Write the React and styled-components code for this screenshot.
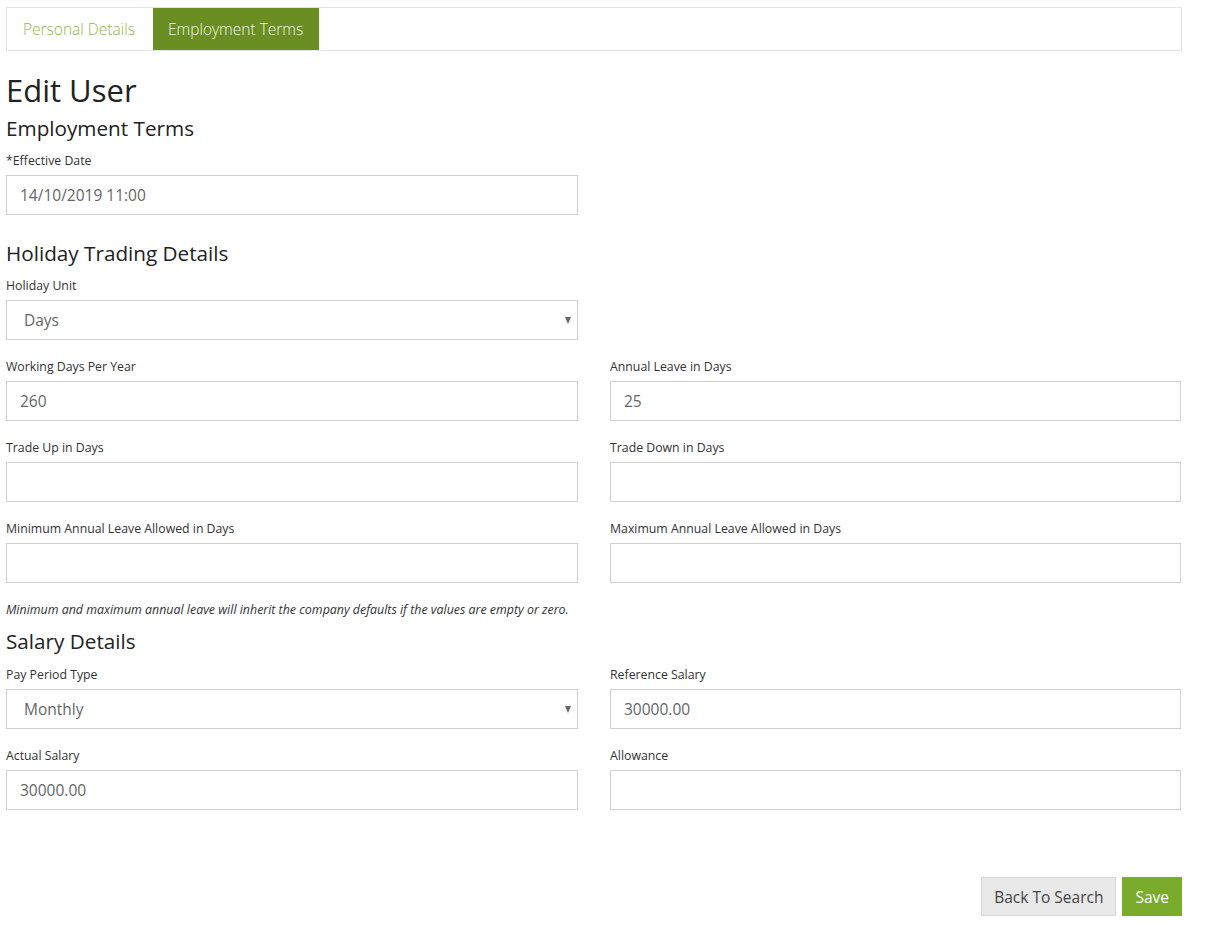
import React from 'react'
import styled, { createGlobalStyle } from 'styled-components'

const Global = createGlobalStyle`
  body {
    margin: 0;
    background: #fff;
    font-family: "Open Sans", "Liberation Sans", sans-serif;
    color: #333;
  }
  * { box-sizing: border-box; }
`

const Page = styled.div`
  width: 1188px;
  padding: 7px 6px 0 6px;
`

const Tabs = styled.div`
  display: flex;
  gap: 2px;
  border: 1px solid #e3e3e3;
  height: 44px;
  background: #fff;
`

const Tab = styled.div`
  display: flex;
  align-items: center;
  padding: 0 16px 0 ${p => (p.active ? '15px' : '16px')};
  font-size: 15.5px;
  font-weight: 300;
  color: ${p => (p.active ? '#f2f7e6' : '#8db656')};
  background: ${p => (p.active ? '#6b8e23' : 'transparent')};
`

const Title = styled.h1`
  font-size: 31px;
  font-weight: 400;
  margin: 21px 0 0;
  line-height: 36px;
  color: #222;
`

const Heading = styled.h3`
  font-size: 20.7px;
  font-weight: 400;
  margin: ${p => p.top || '0'} 0 0;
  line-height: 28px;
  color: #222;
`

const Grid = styled.div`
  display: grid;
  grid-template-columns: 572px 571px;
  column-gap: 32px;
`

const Field = styled.div`
  display: flex;
  flex-direction: column;
  margin-top: ${p => p.top || '0'};
`

const Label = styled.label`
  font-size: 12.3px;
  line-height: 18px;
  margin-bottom: 5px;
  color: #333;
`

const Input = styled.div`
  height: 40px;
  border: 1px solid #d0d0d0;
  display: flex;
  align-items: center;
  padding: 0 13px;
  font-size: 15.5px;
  color: #666;
  background: #fff;
`

const Select = styled(Input)`
  padding: 0 6px 0 17px;
  justify-content: space-between;
`

const Arrow = styled.span`
  width: 0;
  height: 0;
  border-left: 3.5px solid transparent;
  border-right: 3.5px solid transparent;
  border-top: 7px solid #666;
`

const Note = styled.p`
  font-size: 12.4px;
  font-style: italic;
  margin: 19px 0 0;
  line-height: 16px;
  color: #333;
`

const Actions = styled.div`
  display: flex;
  justify-content: flex-end;
  gap: 6px;
  margin-top: 67px;
`

const Button = styled.button`
  height: 39px;
  font-family: inherit;
  font-size: 15.5px;
  padding: 0 12px;
  border: 1px solid ${p => (p.primary ? '#7aab2a' : '#d6d6d6')};
  background: ${p => (p.primary ? '#7aab2a' : '#e8e8e8')};
  color: ${p => (p.primary ? '#fff' : '#444')};
  cursor: pointer;
`

const TextField = ({ label, value, top }) => (
  <Field top={top}>
    <Label>{label}</Label>
    <Input>{value}</Input>
  </Field>
)

const SelectField = ({ label, value, top }) => (
  <Field top={top}>
    <Label>{label}</Label>
    <Select>
      <span>{value}</span>
      <Arrow />
    </Select>
  </Field>
)

const App = () => (
  <Page>
    <Global />
    <Tabs>
      <Tab>Personal Details</Tab>
      <Tab active>Employment Terms</Tab>
    </Tabs>
    <Title>Edit User</Title>
    <Heading top="6px">Employment Terms</Heading>
    <Grid>
      <TextField top="10px" label="*Effective Date" value="14/10/2019 11:00" />
    </Grid>
    <Heading top="24px">Holiday Trading Details</Heading>
    <Grid>
      <SelectField top="10px" label="Holiday Unit" value="Days" />
    </Grid>
    <Grid>
      <TextField top="18px" label="Working Days Per Year" value="260" />
      <TextField top="18px" label="Annual Leave in Days" value="25" />
      <TextField top="18px" label="Trade Up in Days" />
      <TextField top="18px" label="Trade Down in Days" />
      <TextField top="18px" label="Minimum Annual Leave Allowed in Days" />
      <TextField top="18px" label="Maximum Annual Leave Allowed in Days" />
    </Grid>
    <Note>Minimum and maximum annual leave will inherit the company defaults if the values are empty or zero.</Note>
    <Heading top="9px">Salary Details</Heading>
    <Grid>
      <SelectField top="11px" label="Pay Period Type" value="Monthly" />
      <TextField top="11px" label="Reference Salary" value="30000.00" />
      <TextField top="18px" label="Actual Salary" value="30000.00" />
      <TextField top="18px" label="Allowance" />
    </Grid>
    <Actions>
      <Button>Back To Search</Button>
      <Button primary>Save</Button>
    </Actions>
  </Page>
)

export default App
